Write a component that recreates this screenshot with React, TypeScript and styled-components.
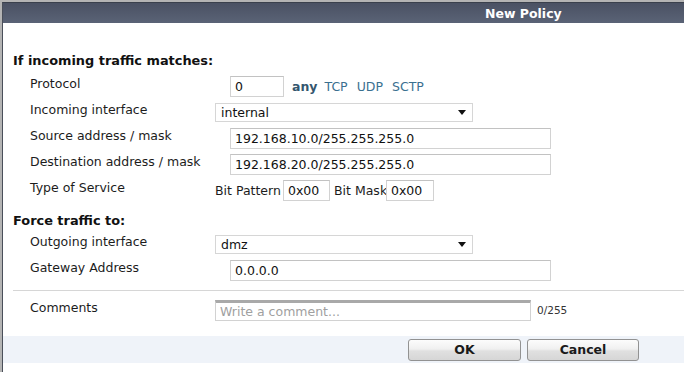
import React from "react";
import styled, { createGlobalStyle } from "styled-components";

const Global = createGlobalStyle`
  html, body { margin: 0; padding: 0; background: #ffffff; }
  body { width: 684px; height: 372px; overflow: hidden; font-family: "DejaVu Sans", Verdana, sans-serif; }
  * { box-sizing: border-box; }
`;

const Frame = styled.div`
  width: 684px;
  height: 372px;
  display: flex;
  flex-direction: column;
  background: #b4b4b4;
  padding-left: 2px;
  padding-top: 2px;
`;

const Dialog = styled.div`
  flex: 1;
  display: flex;
  flex-direction: column;
  background: #ffffff;
  border-left: 1px solid #4a4f5a;
  border-top: 1px solid #3a404c;
`;

const TitleBar = styled.div`
  height: 20px;
  flex: none;
  display: flex;
  align-items: center;
  padding-left: 482px;
  background: linear-gradient(#4a5163, #5a6376);
  color: #ffffff;
  font-size: 12.5px;
  font-weight: bold;
`;

const Body = styled.div`
  display: flex;
  flex-direction: column;
  padding-top: 30px;
`;

const SectionTitle = styled.div<{ $top: number }>`
  height: 16px;
  line-height: 16px;
  margin-top: ${(p) => p.$top}px;
  padding-left: 10px;
  font-size: 12.9px;
  font-weight: bold;
  color: #111111;
`;

const Row = styled.div<{ $top?: number }>`
  height: 26px;
  display: flex;
  align-items: center;
  margin-top: ${(p) => p.$top ?? 0}px;
  padding-left: 27px;
`;

const Label = styled.div`
  width: 185px;
  flex: none;
  font-size: 12.5px;
  color: #1c1c1c;
  padding-bottom: 6px;
`;

const Controls = styled.div`
  display: flex;
  align-items: center;
`;

const TextBox = styled.input<{ $w: number; $indent?: number }>`
  width: ${(p) => p.$w}px;
  height: 21px;
  flex: none;
  margin: 0 0 0 ${(p) => p.$indent ?? 0}px;
  padding: 0 0 0 4px;
  border: 1px solid #d2d2d2;
  border-top-color: #c2c2c2;
  background: #ffffff;
  font-family: "DejaVu Sans", Verdana, sans-serif;
  font-size: 12.5px;
  color: #111111;
  outline: none;
`;

const CommentBox = styled(TextBox)`
  border-top: 3px solid #a9a9a9;
  padding-top: 0;
  &::placeholder { color: #a0a0a0; }
`;

const Proto = styled.span<{ $bold?: boolean; $gap: number }>`
  margin-left: ${(p) => p.$gap}px;
  font-size: 12.5px;
  font-weight: ${(p) => (p.$bold ? "bold" : "normal")};
  color: ${(p) => (p.$bold ? "#34566e" : "#3a7090")};
`;

const Select = styled.div`
  width: 258px;
  height: 19px;
  display: flex;
  align-items: center;
  justify-content: space-between;
  padding: 0 6px 0 5px;
  border: 1px solid #d6d6d6;
  background: #ffffff;
  font-size: 12.5px;
  color: #111111;
`;

const Inline = styled.span<{ $gap?: number; $w: number }>`
  flex: none;
  width: ${(p) => p.$w}px;
  white-space: nowrap;
  margin-left: ${(p) => p.$gap ?? 0}px;
  font-size: 12.5px;
  color: #1c1c1c;
`;

const Separator = styled.div`
  height: 1px;
  margin: 7px 0 0 10px;
  background: #d6d6d6;
`;

const Counter = styled.span`
  margin-left: 6px;
  font-size: 10.5px;
  color: #333333;
`;

const Footer = styled.div`
  height: 27px;
  margin-top: 13px;
  display: flex;
  align-items: center;
  justify-content: flex-end;
  gap: 6px;
  padding-right: 45px;
  background: #eff3f9;
`;

const Button = styled.button<{ $w: number }>`
  width: ${(p) => p.$w}px;
  height: 22px;
  margin: 0;
  padding: 0;
  border: 1px solid #929292;
  border-radius: 3px;
  background: linear-gradient(#fcfcfc 0%, #f0f0f0 45%, #e0e0e0 55%, #d6d6d6 100%);
  font-family: "DejaVu Sans", Verdana, sans-serif;
  font-size: 12.5px;
  font-weight: bold;
  color: #1a1a1a;
`;

const Arrow = () => (
  <svg width="8" height="5" viewBox="0 0 8 5">
    <path d="M0 0 H8 L4 5 Z" fill="#111" />
  </svg>
);

export default function App() {
  return (
    <>
      <Global />
      <Frame>
        <Dialog>
          <TitleBar>New Policy</TitleBar>
          <Body>
            <SectionTitle $top={0}>If incoming traffic matches:</SectionTitle>
            <Row $top={4}>
              <Label>Protocol</Label>
              <Controls>
                <TextBox $w={54} $indent={15} readOnly value="0" />
                <Proto $bold $gap={8}>any</Proto>
                <Proto $gap={7}>TCP</Proto>
                <Proto $gap={9}>UDP</Proto>
                <Proto $gap={9}>SCTP</Proto>
              </Controls>
            </Row>
            <Row>
              <Label>Incoming interface</Label>
              <Select>
                <span>internal</span>
                <Arrow />
              </Select>
            </Row>
            <Row>
              <Label>Source address / mask</Label>
              <TextBox $w={321} $indent={15} readOnly value="192.168.10.0/255.255.255.0" />
            </Row>
            <Row>
              <Label>Destination address / mask</Label>
              <TextBox $w={321} $indent={15} readOnly value="192.168.20.0/255.255.255.0" />
            </Row>
            <Row>
              <Label>Type of Service</Label>
              <Controls>
                <Inline $w={68}>Bit Pattern</Inline>
                <TextBox $w={47} readOnly value="0x00" />
                <Inline $gap={4} $w={52}>Bit Mask</Inline>
                <TextBox $w={48} readOnly value="0x00" />
              </Controls>
            </Row>
            <SectionTitle $top={10}>Force traffic to:</SectionTitle>
            <Row $top={2}>
              <Label>Outgoing interface</Label>
              <Select>
                <span>dmz</span>
                <Arrow />
              </Select>
            </Row>
            <Row>
              <Label>Gateway Address</Label>
              <TextBox $w={321} $indent={15} readOnly value="0.0.0.0" />
            </Row>
            <Separator />
            <Row $top={6}>
              <Label>Comments</Label>
              <Controls>
                <CommentBox $w={316} placeholder="Write a comment..." />
                <Counter>0/255</Counter>
              </Controls>
            </Row>
            <Footer>
              <Button $w={113}>OK</Button>
              <Button $w={112}>Cancel</Button>
            </Footer>
          </Body>
        </Dialog>
      </Frame>
    </>
  );
}
